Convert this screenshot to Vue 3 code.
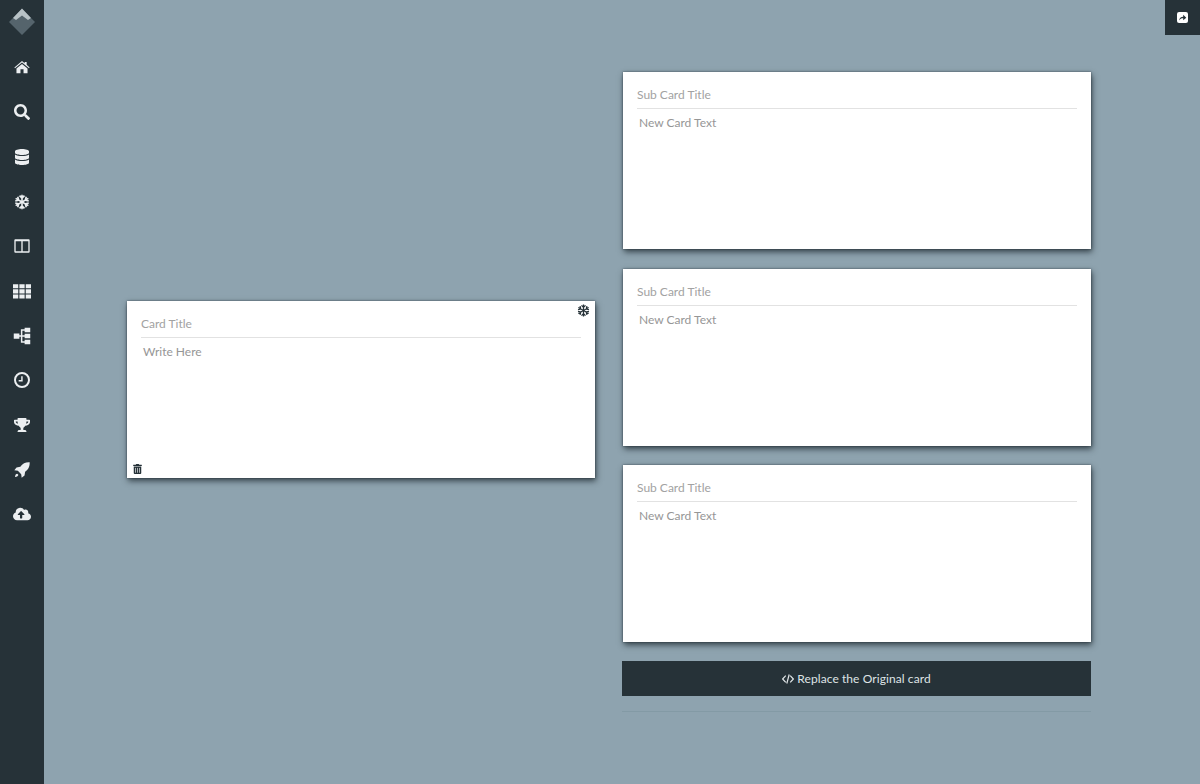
<template>
  <div class="page">
    <nav class="sidebar">
      <a class="logo" href="#">
        <svg viewBox="0 0 28 28" width="28" height="28">
          <polygon points="14,1 27,14 14,27 1,14" fill="#55646c" />
          <polygon points="14,0.500 23,10 20,12 14,7.500 8,12 5,10" fill="#b8c2c6" />
        </svg>
      </a>
      <a v-for="icon in navIcons" :key="icon.name" class="nav-item" href="#">
        <svg v-if="icon.name === 'snowflake'" viewBox="0 0 24 24" class="nav-icon" stroke="currentColor" stroke-width="2.400" fill="none">
          <g v-for="a in arms" :key="a" :transform="`rotate(${a} 12 12)`">
            <path d="M12 12V1M8.300 2.500 12 6.200l3.700-3.700" />
          </g>
        </svg>
        <svg v-else :viewBox="icon.box" class="nav-icon" :class="icon.name" fill="currentColor">
          <path :d="icon.d" />
        </svg>
      </a>
    </nav>

    <main class="content">
      <section class="col left">
        <div class="card">
          <svg class="freeze" viewBox="0 0 24 24" stroke="#263238" stroke-width="2.400" fill="none">
            <g v-for="a in arms" :key="a" :transform="`rotate(${a} 12 12)`">
              <path d="M12 12V1M8.300 2.500 12 6.200l3.700-3.700" />
            </g>
          </svg>
          <div class="card-title">Card Title</div>
          <div class="card-text">Write Here</div>
          <svg class="trash" viewBox="0 0 448 512" fill="#263238">
            <path :d="trashPath" />
          </svg>
        </div>
      </section>

      <section class="col right">
        <div v-for="n in 3" :key="n" class="card sub">
          <div class="card-title">Sub Card Title</div>
          <div class="card-text">New Card Text</div>
        </div>
        <button class="replace">
          <svg viewBox="0 0 16 16" class="code" fill="none" stroke="currentColor" stroke-width="1.600">
            <path d="M5 3.500.9 8 5 12.500M11 3.500 15.100 8 11 12.500M9.600 2 6.400 14" />
          </svg>
          Replace the Original card
        </button>
        <hr class="divider" />
      </section>
    </main>

    <div class="corner">
      <svg viewBox="0 0 16 16" width="11" height="11">
        <rect width="16" height="16" rx="3" fill="#fff" />
        <path d="M3 12.500c.3-3.500 2.600-5.500 6-5.600V4l4.500 4.300L9 12V9.200c-2.600 0-4.500.9-6 3.300z" fill="#263238" />
      </svg>
    </div>
  </div>
</template>

<script setup>
const arms = [0, 60, 120, 180, 240, 300]

const trashPath = 'M32 464a48 48 0 0 0 48 48h288a48 48 0 0 0 48-48V128H32zm272-256a16 16 0 0 1 32 0v224a16 16 0 0 1-32 0zm-96 0a16 16 0 0 1 32 0v224a16 16 0 0 1-32 0zm-96 0a16 16 0 0 1 32 0v224a16 16 0 0 1-32 0zM432 32H312l-9.400-18.700A24 24 0 0 0 281.100 0H166.800a23.720 23.720 0 0 0-21.400 13.300L136 32H16A16 16 0 0 0 0 48v32a16 16 0 0 0 16 16h416a16 16 0 0 0 16-16V48a16 16 0 0 0-16-16z'

const navIcons = [
  { name: 'home', box: '0 0 24 24', d: 'M12 3 .6 12.600l.9 1.400L12 5.400 22.500 14l.9-1.400L19 8.800V4.500h-3v1.800zM3.700 14.400 12 7.500l8.300 6.900V21.500h-6v-6h-4.600v6h-6z' },
  { name: 'search', box: '0 0 512 512', d: 'M505 442.700L405.300 343c-4.500-4.500-10.600-7-17-7H372c27.600-35.300 44-79.700 44-128C416 93.100 322.900 0 208 0S0 93.100 0 208s93.100 208 208 208c48.300 0 92.700-16.400 128-44v16.300c0 6.400 2.500 12.500 7 17l99.700 99.700c9.400 9.400 24.600 9.400 33.900 0l28.300-28.300c9.400-9.400 9.400-24.600.1-34zM208 336c-70.700 0-128-57.200-128-128 0-70.700 57.200-128 128-128 70.700 0 128 57.200 128 128 0 70.700-57.200 128-128 128z' },
  { name: 'database', box: '0 0 448 512', d: 'M448 73.143v45.714C448 159.143 347.667 192 224 192S0 159.143 0 118.857V73.143C0 32.857 100.333 0 224 0s224 32.857 224 73.143zM448 176v102.857C448 319.143 347.667 352 224 352S0 319.143 0 278.857V176c48.125 33.143 136.208 48.572 224 48.572S399.874 209.143 448 176zm0 160v102.857C448 479.143 347.667 512 224 512S0 479.143 0 438.857V336c48.125 33.143 136.208 48.572 224 48.572S399.874 369.143 448 336z' },
  { name: 'snowflake' },
  { name: 'columns', box: '0 0 24 24', d: 'M2 2h20a1.500 1.500 0 0 1 1.500 1.500v17A1.500 1.500 0 0 1 22 22H2a1.500 1.500 0 0 1-1.500-1.500v-17A1.500 1.500 0 0 1 2 2zm.5 3v15h8.500V5zm10.500 0v15h8.500V5z' },
  { name: 'grid', box: '0 0 24 24', d: 'M0 3h7v5.400H0zM8.500 3h7v5.400h-7zM17 3h7v5.400h-7zM0 9.800h7v5.400H0zM8.500 9.800h7v5.400h-7zM17 9.800h7v5.400h-7zM0 16.600h7V22H0zM8.500 16.600h7V22h-7zM17 16.600h7V22h-7z' },
  { name: 'sitemap', box: '0 0 24 24', d: 'M15.500 1H23v6h-7.500zM15.500 9H23v6h-7.500zM15.500 17H23v6h-7.500zM1 8.500h7.500v7H1zM8.500 11H10.500V3h5v2H12.500v6h3v2h-3v6h3v2h-5v-8h-2z' },
  { name: 'clock', box: '0 0 24 24', d: 'M12 0a12 12 0 1 0 0 24 12 12 0 0 0 0-24zm0 21a9 9 0 1 1 0-18 9 9 0 0 1 0 18zM13 6.500h-2.200V12H7v2.200h6z' },
  { name: 'trophy', box: '0 0 576 512', d: 'M552 64H448V24c0-13.300-10.700-24-24-24H152c-13.300 0-24 10.700-24 24v40H24C10.700 64 0 74.700 0 88v56c0 35.700 22.500 72.400 61.900 100.700 31.500 22.700 69.800 37.100 110 41.700C203.300 338.500 240 360 240 360v72h-48c-35.300 0-64 20.700-64 56v12c0 6.600 5.400 12 12 12h296c6.600 0 12-5.400 12-12v-12c0-35.300-28.700-56-64-56h-48v-72s36.700-21.500 68.100-73.600c40.300-4.600 78.600-19 110-41.700 39.300-28.300 61.900-65 61.900-100.700V88c0-13.300-10.700-24-24-24zM99.300 192.800C74.900 175.200 64 155.600 64 144v-16h64.200c1 32.600 5.800 61.200 12.800 86.200-15.100-5.200-29.200-12.400-41.700-21.400zM512 144c0 16.100-17.700 36.100-35.300 48.800-12.500 9-26.700 16.200-41.800 21.400 7-25 11.800-53.600 12.800-86.200H512v16z' },
  { name: 'rocket', box: '0 0 24 24', d: 'M23.500.5c-6-.3-10.500 1.500-14 6.800L3.800 8.200.5 12.500l5.300.7 5 5 .7 5.300 4.300-3.300.9-5.700c5.300-3.500 7.100-8 6.800-14.500zM4.800 17.500c-1.800 0-3.100 1.800-3.300 5 3.200-.2 5-1.500 5-3.300z' },
  { name: 'upload', box: '0 0 640 512', d: 'M537.600 226.600c4.100-10.700 6.400-22.400 6.400-34.600 0-53-43-96-96-96-19.700 0-38.100 6-53.300 16.200C367 64.200 315.300 32 256 32c-88.400 0-160 71.600-160 160 0 2.700.1 5.400.2 8.100C40.200 219.800 0 273.200 0 336c0 79.500 64.500 144 144 144h368c70.700 0 128-57.300 128-128 0-61.900-44-113.600-102.400-125.400zM393.400 288H328v112c0 8.800-7.200 16-16 16h-48c-8.800 0-16-7.200-16-16V288h-65.400c-14.300 0-21.400-17.200-11.300-27.300l105.400-105.400c6.200-6.200 16.400-6.200 22.600 0l105.400 105.400c10.100 10.100 2.900 27.300-11.300 27.300z' },
]
</script>

<style>
html,
body {
  margin: 0;
  height: 100%;
}
</style>

<style scoped>
.page {
  display: flex;
  height: 784px;
  overflow: hidden;
  position: relative;
  background-color: #8ea3af;
  font-family: Lato, "Open Sans", sans-serif;
}

.sidebar {
  width: 44px;
  flex-shrink: 0;
  background-color: #263238;
  display: flex;
  flex-direction: column;
  align-items: center;
}

.logo {
  height: 45.100px;
  display: flex;
  align-items: flex-start;
  padding-top: 8px;
  box-sizing: border-box;
}

.nav-item {
  width: 44px;
  height: 44.700px;
  display: flex;
  align-items: center;
  justify-content: center;
  color: #eceff1;
}

.nav-icon {
  width: 16px;
  height: 16px;
}

.nav-icon.grid,
.nav-icon.sitemap,
.nav-icon.upload {
  width: 18px;
  height: 18px;
}

.content {
  flex: 1;
  display: flex;
  align-items: center;
  padding-left: 83px;
  gap: 28px;
}

.col {
  width: 468px;
  display: flex;
  flex-direction: column;
}

.left {
  margin-bottom: 5px;
}

.right {
  gap: 19.500px;
  margin-bottom: 0.500px;
}

.card {
  position: relative;
  height: 177px;
  box-sizing: border-box;
  padding: 12px 14px 0;
  background-color: #fff;
  box-shadow: 0 0 2px rgba(20, 30, 36, 0.6), 1px 3px 6px rgba(20, 30, 36, 0.7);
}

.card-title {
  height: 24px;
  line-height: 21px;
  font-size: 12px;
  color: #a2a2a2;
  border-bottom: 1px solid #e2e2e2;
}

.card-text {
  margin-top: 6px;
  padding-left: 2px;
  font-size: 12px;
  line-height: 16px;
  color: #969696;
}

.freeze {
  position: absolute;
  top: 3px;
  right: 5px;
  width: 13px;
  height: 13px;
}

.trash {
  position: absolute;
  left: 6px;
  bottom: 4px;
  width: 9px;
  height: 10px;
}

.replace {
  height: 35px;
  margin: -0.500px 0 0 -1px;
  padding: 0;
  border: 0;
  display: flex;
  align-items: center;
  justify-content: center;
  gap: 3px;
  background-color: #263238;
  color: #dfe4e6;
  font-family: inherit;
  font-size: 12px;
  letter-spacing: 0.080px;
}

.code {
  width: 12px;
  height: 12px;
}

.divider {
  margin: -5px 0 0 -1px;
  border: 0;
  border-top: 1px solid #839aa5;
}

.corner {
  position: absolute;
  top: 0;
  right: 0;
  width: 35px;
  height: 35px;
  display: flex;
  align-items: center;
  justify-content: center;
  background-color: #263238;
}
</style>
